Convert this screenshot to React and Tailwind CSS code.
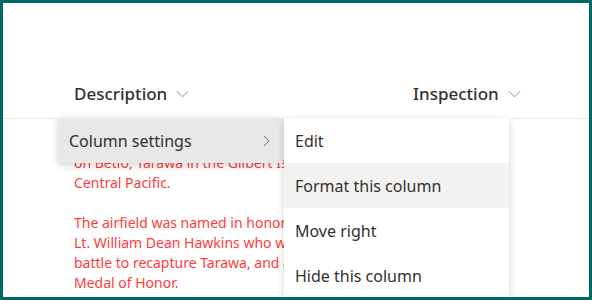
import React from 'react';

const font = { fontFamily: '"Segoe UI", "Noto Sans", "Open Sans", sans-serif' };

const Chevron = ({ className }) => (
  <svg viewBox="0 0 16 16" className={className} fill="none" stroke="currentColor" strokeWidth="1">
    <path d="M2 5.5l6 6 6-6" />
  </svg>
);

const ChevronRight = ({ className }) => (
  <svg viewBox="0 0 16 16" className={className} fill="none" stroke="currentColor" strokeWidth="1">
    <path d="M5.5 2l6 6-6 6" />
  </svg>
);

const lines = [
  'on Betio, Tarawa in the Gilbert Islands of the',
  'Central Pacific.',
  '',
  'The airfield was named in honor of First',
  'Lt. William Dean Hawkins who was killed in the',
  'battle to recapture Tarawa, and awarded the',
  'Medal of Honor.',
];

const App = () => {
  return (
    <div className="w-[592px] h-[300px] border-[3px] border-[#006765] bg-white overflow-hidden relative" style={font}>
      {/* column header */}
      <div className="h-[116px] border-b border-[#edebe9] flex items-end pb-[12px]">
        <div className="w-[410px] pl-[71px] flex items-center gap-[8px] text-[17px] font-medium text-[#323130]">
          Description
          <Chevron className="w-[15px] h-[15px] text-[#8a8886]" />
        </div>
        <div className="flex items-center gap-[8px] text-[17px] font-medium text-[#323130]">
          Inspection
          <Chevron className="w-[15px] h-[15px] text-[#8a8886]" />
        </div>
      </div>

      {/* cell text, the rest is hidden under the menu */}
      <div className="ml-[71px] w-[210px] overflow-hidden pt-[34px] text-[14px] leading-[20px] text-[#ff3c3c] whitespace-nowrap">
        {lines.map((l, i) => (
          <div key={i} className="h-[20px]">{l}</div>
        ))}
      </div>

      {/* context menu */}
      <div className="absolute left-[55px] top-[115px] w-[225px] h-[45px] bg-[#e8e8e8] shadow-[0_2px_8px_rgba(0,0,0,0.18)] flex items-center justify-between pl-[11px] pr-[10px] text-[16px] text-[#323130]">
        Column settings
        <ChevronRight className="w-[14px] h-[14px] text-[#605e5c]" />
      </div>

      {/* submenu */}
      <div className="absolute left-[281px] top-[115px] w-[225px] bg-white shadow-[0_2px_8px_rgba(0,0,0,0.18)] text-[16px] text-[#323130]">
        <div className="h-[45px] flex items-center pl-[11px]">Edit</div>
        <div className="h-[45px] flex items-center pl-[11px] bg-[#f3f2f1]">Format this column</div>
        <div className="h-[45px] flex items-center pl-[11px]">Move right</div>
        <div className="h-[45px] flex items-center pl-[11px]">Hide this column</div>
      </div>
    </div>
  );
};

export default App;
